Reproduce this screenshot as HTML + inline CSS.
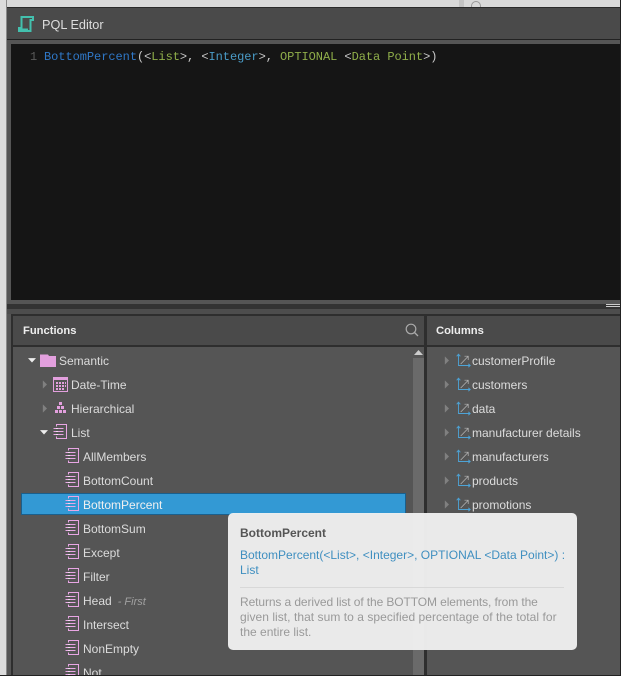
<!DOCTYPE html>
<html><head><meta charset="utf-8"><style>
html,body{margin:0;padding:0;background:#555}
#r{position:relative;width:621px;height:676px;overflow:hidden;background:#555;font:12px "Liberation Sans",sans-serif;color:#dcdcdc}
#r div,#r svg{position:absolute}
.t{white-space:nowrap;line-height:16px}
.b{font-weight:bold;color:#eee;font-size:11.2px}
.c{font:12px/16px "Liberation Mono",monospace;letter-spacing:-.05px;white-space:pre}
</style></head><body><div id="r">
<svg width="0" height="0" style="position:absolute"><defs>
<symbol id="l" viewBox="0 0 14 15"><path d="M3.500 2.500V.5H13.500V14.500H3.500V12.500M.5 4.500H10.500M.5 7.500H10.500M.5 10.500H10.500" fill="none" stroke="#e8a6e4" stroke-width="1"/><path d="M3 4h2v1H3zM3 7h2v1H3zM3 10h2v1H3z" fill="#f5dcf3"/></symbol>
<symbol id="g" viewBox="0 0 15 15"><path d="M2.500 13V1.500M.7 3.300L2.500 1.200 4.300 3.300M2.500 12.500H14M12.300 10.800L14.200 12.500 12.300 14.200" fill="none" stroke="#4da3d6" stroke-width=".9"/><path d="M4.700 11L12 3.500M8.500 3.200H12.200V7" fill="none" stroke="#b8b8b8" stroke-width=".7"/></symbol>
<symbol id="a" viewBox="0 0 6 10"><path d="M1 0L6 5 1 10Z" fill="#808080"/></symbol>
<symbol id="d" viewBox="0 0 10 6"><path d="M0 0H10L5 5.500Z" fill="#eee"/></symbol>
</defs></svg>

<div style="left:0;top:0;width:621px;height:7px;background:#d9d9d9"></div>
<div style="left:0;top:0;width:6px;height:676px;background:#dcdcdc"></div>
<div style="left:6px;top:0;width:1px;height:676px;background:#8a8a8a"></div>
<div style="left:459px;top:0;width:5px;height:7px;background:#c4c4c4"></div>
<div style="left:471px;top:1px;width:10px;height:10px;border:1px solid #999;border-radius:50%;box-sizing:border-box;clip-path:inset(0 0 4px 0)"></div>
<div style="left:7px;top:7px;width:614px;height:1px;background:#2a2a2a"></div>
<div style="left:7px;top:8px;width:614px;height:31px;background:#4a4a4a"></div>
<div style="left:7px;top:39px;width:614px;height:1px;background:#222"></div>
<div style="left:7px;top:40px;width:614px;height:4px;background:#555"></div>

<svg style="left:18px;top:16px" width="16" height="17" viewBox="0 0 16 17"><path d="M4 1H15V4H12.500V15H1V12H3.500V1Z" fill="none" stroke="#43c0ae" stroke-width="2"/><path d="M1 12.500H10V16H1Z" fill="#43c0ae"/></svg>
<div class="t" style="left:42px;top:17px;font-size:12.700px;color:#ddd">PQL Editor</div>

<div style="left:11px;top:44px;width:610px;height:256px;background:#151515"></div>
<div class="c" style="left:30px;top:49px;color:#5a5a5a">1</div>
<div class="c" style="left:44px;top:49px;color:#c8c8c8"><span style="color:#2f78c8">BottomPercent</span>(&lt;<span style="color:#8fae4a">List</span>&gt;, &lt;<span style="color:#4a9cc8">Integer</span>&gt;, <span style="color:#8fae4a">OPTIONAL</span> &lt;<span style="color:#8fae4a">Data Point</span>&gt;)</div>

<div style="left:7px;top:300px;width:614px;height:4px;background:#555"></div>
<div style="left:7px;top:304px;width:614px;height:5px;background:#333"></div>
<div style="left:606px;top:304px;width:14px;height:1px;background:#ccc"></div>
<div style="left:606px;top:306px;width:14px;height:1px;background:#ccc"></div>
<div style="left:7px;top:309px;width:614px;height:5px;background:#4d4d4d"></div>

<div style="left:11px;top:314px;width:610px;height:2px;background:#2e2e2e"></div>
<div style="left:11px;top:314px;width:2px;height:362px;background:#2e2e2e"></div>
<div style="left:13px;top:316px;width:608px;height:29px;background:#4a4a4a"></div>
<div style="left:13px;top:345px;width:608px;height:2px;background:#2e2e2e"></div>
<div style="left:424px;top:314px;width:3px;height:362px;background:#2e2e2e"></div>
<div style="left:413px;top:347px;width:11px;height:329px;background:#6a6a6a"></div>
<div style="left:413px;top:347px;width:11px;height:11px;background:#555"></div>
<svg style="left:414px;top:350px" width="9" height="5" viewBox="0 0 9 5"><path d="M0 5L4.500 0 9 5Z" fill="#ccc"/></svg>

<div class="t b" style="left:23px;top:323px">Functions</div>
<div class="t b" style="left:436px;top:323px">Columns</div>
<svg style="left:405px;top:323px" width="14" height="14" viewBox="0 0 14 14"><circle cx="6" cy="6" r="4.800" fill="none" stroke="#aaa" stroke-width="1.200"/><path d="M9.500 9.500L13 13" stroke="#aaa" stroke-width="1.300"/></svg>

<svg style="left:28px;top:358px" width="8" height="5"><use href="#d" width="8" height="5"/></svg>
<svg style="left:40px;top:353px" width="16" height="14" viewBox="0 0 16 14"><path d="M0 1.500H8L9 3H16V14H0Z" fill="#e3a0de"/></svg>
<div class="t" style="left:59px;top:353px">Semantic</div>

<svg style="left:42px;top:380px" width="5" height="9"><use href="#a" width="5" height="9"/></svg>
<svg style="left:53px;top:377px" width="15" height="15" viewBox="0 0 15 15"><path d="M.5 .5H14.500V14.500H.5Z" fill="none" stroke="#e3a0de"/><path d="M1 1H14V3H1Z" fill="#e3a0de"/><path d="M3 5h2v2H3zM6 5h2v2H6zM9 5h2v2H9zM12 5h1v2h-1zM3 8h2v2H3zM6 8h2v2H6zM9 8h2v2H9zM12 8h1v2h-1zM3 11h2v2H3zM6 11h2v2H6zM9 11h2v2H9z" fill="#e3a0de"/></svg>
<div class="t" style="left:71px;top:377px">Date-Time</div>

<svg style="left:42px;top:404px" width="5" height="9"><use href="#a" width="5" height="9"/></svg>
<svg style="left:55px;top:402px" width="11" height="11" viewBox="0 0 11 11"><path d="M4 0h3v3H4zM2 4h3v3H2zM6 4h3v3H6zM0 8h3v3H0zM4 8h3v3H4zM8 8h3v3H8z" fill="#e3a0de"/></svg>
<div class="t" style="left:71px;top:401px">Hierarchical</div>

<svg style="left:40px;top:430px" width="8" height="5"><use href="#d" width="8" height="5"/></svg>
<svg style="left:53px;top:424px" width="14" height="15"><use href="#l" width="14" height="15"/></svg>
<div class="t" style="left:71px;top:425px">List</div>

<div style="left:21px;top:493px;width:385px;height:22px;box-sizing:border-box;background:#3399d4;border:1px solid #1a5f8c"></div>

<svg style="left:65px;top:448px" width="14" height="15"><use href="#l" width="14" height="15"/></svg>
<div class="t" style="left:83px;top:449px">AllMembers</div>
<svg style="left:65px;top:472px" width="14" height="15"><use href="#l" width="14" height="15"/></svg>
<div class="t" style="left:83px;top:473px">BottomCount</div>
<svg style="left:65px;top:496px" width="14" height="15"><use href="#l" width="14" height="15"/></svg>
<div class="t" style="left:83px;top:497px;color:#f0f0f0">BottomPercent</div>
<svg style="left:65px;top:520px" width="14" height="15"><use href="#l" width="14" height="15"/></svg>
<div class="t" style="left:83px;top:521px">BottomSum</div>
<svg style="left:65px;top:544px" width="14" height="15"><use href="#l" width="14" height="15"/></svg>
<div class="t" style="left:83px;top:545px">Except</div>
<svg style="left:65px;top:568px" width="14" height="15"><use href="#l" width="14" height="15"/></svg>
<div class="t" style="left:83px;top:569px">Filter</div>
<svg style="left:65px;top:592px" width="14" height="15"><use href="#l" width="14" height="15"/></svg>
<div class="t" style="left:83px;top:593px">Head<span style="font-style:italic;color:#a0a0a0;font-size:11px;margin-left:6px">- First</span></div>
<svg style="left:65px;top:616px" width="14" height="15"><use href="#l" width="14" height="15"/></svg>
<div class="t" style="left:83px;top:617px">Intersect</div>
<svg style="left:65px;top:640px" width="14" height="15"><use href="#l" width="14" height="15"/></svg>
<div class="t" style="left:83px;top:641px">NonEmpty</div>
<svg style="left:65px;top:664px" width="14" height="15"><use href="#l" width="14" height="15"/></svg>
<div class="t" style="left:83px;top:665px">Not</div>

<svg style="left:444px;top:356px" width="5" height="9"><use href="#a" width="5" height="9"/></svg>
<svg style="left:456px;top:353px" width="15" height="15"><use href="#g" width="15" height="15"/></svg>
<div class="t" style="left:472px;top:353px">customerProfile</div>
<svg style="left:444px;top:380px" width="5" height="9"><use href="#a" width="5" height="9"/></svg>
<svg style="left:456px;top:377px" width="15" height="15"><use href="#g" width="15" height="15"/></svg>
<div class="t" style="left:472px;top:377px">customers</div>
<svg style="left:444px;top:404px" width="5" height="9"><use href="#a" width="5" height="9"/></svg>
<svg style="left:456px;top:401px" width="15" height="15"><use href="#g" width="15" height="15"/></svg>
<div class="t" style="left:472px;top:401px">data</div>
<svg style="left:444px;top:428px" width="5" height="9"><use href="#a" width="5" height="9"/></svg>
<svg style="left:456px;top:425px" width="15" height="15"><use href="#g" width="15" height="15"/></svg>
<div class="t" style="left:472px;top:425px">manufacturer details</div>
<svg style="left:444px;top:452px" width="5" height="9"><use href="#a" width="5" height="9"/></svg>
<svg style="left:456px;top:449px" width="15" height="15"><use href="#g" width="15" height="15"/></svg>
<div class="t" style="left:472px;top:449px">manufacturers</div>
<svg style="left:444px;top:476px" width="5" height="9"><use href="#a" width="5" height="9"/></svg>
<svg style="left:456px;top:473px" width="15" height="15"><use href="#g" width="15" height="15"/></svg>
<div class="t" style="left:472px;top:473px">products</div>
<svg style="left:444px;top:500px" width="5" height="9"><use href="#a" width="5" height="9"/></svg>
<svg style="left:456px;top:497px" width="15" height="15"><use href="#g" width="15" height="15"/></svg>
<div class="t" style="left:472px;top:497px">promotions</div>

<div style="left:228px;top:513px;width:349px;height:137px;background:rgba(240,240,240,.97);border-radius:5px"></div>
<div class="t" style="left:240px;top:525px;font-weight:bold;color:#555;font-size:12px">BottomPercent</div>
<div class="t" style="left:240px;top:547px;color:#3f8fc0;font-size:12px">BottomPercent(&lt;List&gt;, &lt;Integer&gt;, OPTIONAL &lt;Data Point&gt;) :</div>
<div class="t" style="left:240px;top:562px;color:#3f8fc0;font-size:12px">List</div>
<div style="left:240px;top:587px;width:324px;height:1px;background:#d8d8d8"></div>
<div class="t" style="left:240px;top:594px;color:#999;font-size:12px;letter-spacing:-.1px">Returns a derived list of the BOTTOM elements, from the</div>
<div class="t" style="left:240px;top:609px;color:#999;font-size:12px;letter-spacing:.05px">given list, that sum to a specified percentage of the total for</div>
<div class="t" style="left:240px;top:624px;color:#999;font-size:12px">the entire list.</div>

<div style="left:620px;top:0;width:1px;height:676px;background:#222"></div>
<div style="left:0;top:675px;width:621px;height:1px;background:#222"></div>
</div></body></html>
